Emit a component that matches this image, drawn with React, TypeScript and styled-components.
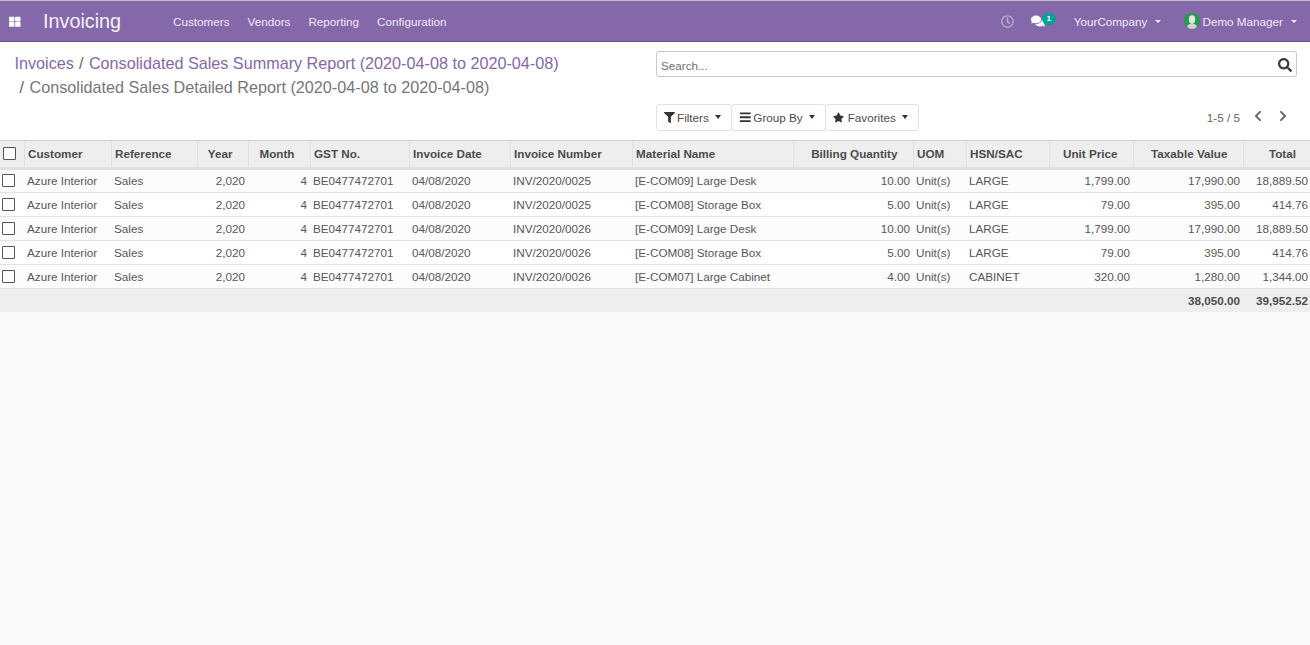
import { FC } from 'react'
import styled, { createGlobalStyle } from 'styled-components'
import { FaFilter, FaBars, FaStar, FaComments, FaChevronLeft, FaChevronRight, FaSearch, FaThLarge, FaRegClock } from 'react-icons/fa'

const GlobalStyle = createGlobalStyle`
  html, body {
    margin: 0;
    height: 100%;
    background: #f9f9f9;
    font-family: 'Liberation Sans', Arial, sans-serif;
    font-size: 11.7px;
    color: #4c4c4c;
  }
`

const Page = styled.div`
  min-height: 645px;
  background: #f9f9f9;
  overflow: hidden;
`

const NavBar = styled.header`
  height: 42px;
  box-sizing: border-box;
  border-top: 1px solid #bdbdbd;
  border-bottom: 1px solid #6d5292;
  background: #8568aa;
  display: flex;
  align-items: center;
  color: #fff;
`

const AppsToggle = styled.span`
  width: 43px;
  padding: 1px 0 0 9px;
  box-sizing: border-box;
  display: flex;
  font-size: 11.5px;
`

const Brand = styled.span`
  width: 130px;
  padding-top: 1px;
  font-size: 19.8px;
  line-height: 1;
  color: #f4f1f8;
`

const Menu = styled.nav`
  display: flex;
  gap: 18px;
  font-size: 11.7px;
  color: #efeaf5;
`

const Systray = styled.div`
  margin-left: auto;
  display: flex;
  align-items: center;
  color: #efeaf5;
`

const Clock = styled.span`
  display: flex;
  font-size: 13px;
  color: #bdaed3;
  margin-right: 17px;
`

const Messages = styled.span`
  position: relative;
  display: flex;
  font-size: 14px;
  color: #fff;
  margin-right: 29px;
`

const Badge = styled.span`
  position: absolute;
  left: 11px;
  top: -1px;
  width: 14px;
  height: 12px;
  border-radius: 6px;
  background: #00a09d;
  color: #fff;
  font-size: 8px;
  font-weight: bold;
  line-height: 12px;
  text-align: center;
`

const Caret = styled.span`
  display: inline-block;
  margin-left: 8px;
  vertical-align: 2px;
  border-top: 3.5px solid currentColor;
  border-left: 3.5px solid transparent;
  border-right: 3.5px solid transparent;
`

const SystrayMenu = styled.span<{ $gap: number }>`
  display: flex;
  align-items: center;
  margin-right: ${(p) => p.$gap}px;
`

const Avatar = styled.svg`
  width: 16px;
  height: 16px;
  margin-right: 2px;
`

const ControlPanel = styled.section`
  height: 99px;
  box-sizing: border-box;
  background: #fff;
  border-bottom: 1px solid #cfcfcf;
  display: grid;
  grid-template-columns: 656px 1fr;
  padding-right: 13px;
`

const Breadcrumb = styled.div`
  padding: 9px 0 0 14.5px;
  font-size: 16.2px;
  line-height: 24px;
  color: #777;
`

const Crumb = styled.a`
  color: #8568aa;
`

const Sep = styled.span`
  padding: 0 5.5px 0 5px;
  color: #666;
`

const RightPanel = styled.div`
  padding-top: 9px;
  display: flex;
  flex-direction: column;
`

const SearchBox = styled.div`
  height: 26px;
  box-sizing: border-box;
  border: 1px solid #c9c9c9;
  border-radius: 3px;
  display: flex;
  align-items: center;
  justify-content: space-between;
  padding: 3px 4px 0 4px;
  color: #6f6f6f;
  font-size: 11.7px;
`

const SearchIcon = styled.span`
  display: flex;
  color: #333d45;
  font-size: 14px;
  margin-top: -2px;
`

const ToolRow = styled.div`
  margin-top: 27px;
  display: flex;
  align-items: center;
  justify-content: space-between;
`

const BtnGroup = styled.div`
  display: flex;
`

const ToolBtn = styled.button<{ $iconGap: number; $iconSize: number }>`
  height: 27px;
  box-sizing: border-box;
  padding: 0 10px 0 7px;
  margin-right: -1px;
  border: 1px solid #e2e2e2;
  border-radius: 3px;
  background: #fff;
  color: #4c4c4c;
  font: inherit;
  display: flex;
  align-items: center;
  svg {
    font-size: ${(p) => p.$iconSize}px;
    margin-right: ${(p) => p.$iconGap}px;
    color: #333;
  }
  ${Caret} {
    margin: 0 0 2px 6px;
    color: #333;
    border-top-width: 4px;
  }
`

const Pager = styled.div`
  display: flex;
  align-items: center;
  color: #6f6259;
  font-size: 11.7px;
  svg {
    font-size: 12px;
    color: #666;
  }
`

const PagerValue = styled.span`
  margin-right: 12px;
`

const PagerPrev = styled.span`
  display: flex;
  margin-bottom: 4px;
`

const PagerNext = styled.span`
  display: flex;
  margin: 0 8px 4px 13px;
`

const ListTable = styled.table`
  width: 1310px;
  table-layout: fixed;
  border-collapse: collapse;
  background: #fff;
  font-size: 11.7px;
  color: #4c4c4c;
`

const HeadCell = styled.th<{ $right?: boolean }>`
  height: 27px;
  padding: 0 3.5px;
  box-sizing: border-box;
  background: #eee;
  border-left: 1px solid #dee2e6;
  border-bottom: 3px solid #dee2e6;
  font-weight: bold;
  color: #4c4c4c;
  text-align: ${(p) => (p.$right ? 'right' : 'left')};
  padding-right: ${(p) => (p.$right ? 15 : 3.5)}px;
  &:first-child {
    border-left: 0;
  }
  &:last-child {
    padding-right: 14px;
  }
`

const Row = styled.tr<{ $odd: boolean }>`
  background: ${(p) => (p.$odd ? '#fcfcfc' : '#fff')};
`

const Cell = styled.td<{ $right?: boolean }>`
  height: 24px;
  padding: 0 3px;
  box-sizing: border-box;
  border-bottom: 1px solid #dee2e6;
  white-space: nowrap;
  overflow: hidden;
  color: #575757;
  text-align: ${(p) => (p.$right ? 'right' : 'left')};
  &:last-child {
    padding-right: 2px;
  }
`

const FootCell = styled.td`
  height: 24px;
  padding: 0 3px;
  box-sizing: border-box;
  background: #eee;
  font-weight: bold;
  text-align: right;
  color: #4c4c4c;
  &:last-child {
    padding-right: 2px;
  }
`

const Check = styled.span`
  display: block;
  width: 13px;
  height: 13px;
  box-sizing: border-box;
  border: 1px solid #555;
  background: #fff;
  margin-left: -1px;
  border-radius: 1px;
`

const widths = [24, 87, 86, 51, 62, 99, 101, 122, 161, 120, 53, 83, 84, 110, 67]

const columns: { label: string; right?: boolean }[] = [
  { label: 'Customer' },
  { label: 'Reference' },
  { label: 'Year', right: true },
  { label: 'Month', right: true },
  { label: 'GST No.' },
  { label: 'Invoice Date' },
  { label: 'Invoice Number' },
  { label: 'Material Name' },
  { label: 'Billing Quantity', right: true },
  { label: 'UOM' },
  { label: 'HSN/SAC' },
  { label: 'Unit Price', right: true },
  { label: 'Taxable Value', right: true },
  { label: 'Total', right: true },
]

const rows = [
  ['INV/2020/0025', '[E-COM09] Large Desk', '10.00', 'LARGE', '1,799.00', '17,990.00', '18,889.50'],
  ['INV/2020/0025', '[E-COM08] Storage Box', '5.00', 'LARGE', '79.00', '395.00', '414.76'],
  ['INV/2020/0026', '[E-COM09] Large Desk', '10.00', 'LARGE', '1,799.00', '17,990.00', '18,889.50'],
  ['INV/2020/0026', '[E-COM08] Storage Box', '5.00', 'LARGE', '79.00', '395.00', '414.76'],
  ['INV/2020/0026', '[E-COM07] Large Cabinet', '4.00', 'CABINET', '320.00', '1,280.00', '1,344.00'],
]

const App: FC = () => {
  return (
    <Page>
      <GlobalStyle />
      <NavBar>
        <AppsToggle>
          <FaThLarge />
        </AppsToggle>
        <Brand>Invoicing</Brand>
        <Menu>
          <span>Customers</span>
          <span>Vendors</span>
          <span>Reporting</span>
          <span>Configuration</span>
        </Menu>
        <Systray>
          <Clock>
            <FaRegClock />
          </Clock>
          <Messages>
            <FaComments />
            <Badge>1</Badge>
          </Messages>
          <SystrayMenu $gap={23}>
            YourCompany
            <Caret />
          </SystrayMenu>
          <SystrayMenu $gap={13}>
            <Avatar viewBox="0 0 16 16">
              <circle cx="8" cy="8" r="8" fill="#1f9d4d" />
              <ellipse cx="8" cy="6.5" rx="3.2" ry="4.2" fill="#e4e4e4" />
              <path d="M3 14c1-3 3-3.6 5-3.6s4 .6 5 3.6a8 8 0 0 1-10 0z" fill="#d2d2d2" />
            </Avatar>
            Demo Manager
            <Caret />
          </SystrayMenu>
        </Systray>
      </NavBar>

      <ControlPanel>
        <Breadcrumb>
          <div>
            <Crumb>Invoices</Crumb>
            <Sep>/</Sep>
            <Crumb>Consolidated Sales Summary Report (2020-04-08 to 2020-04-08)</Crumb>
          </div>
          <div>
            <Sep>/</Sep>
            Consolidated Sales Detailed Report (2020-04-08 to 2020-04-08)
          </div>
        </Breadcrumb>
        <RightPanel>
          <SearchBox>
            Search...
            <SearchIcon>
              <FaSearch />
            </SearchIcon>
          </SearchBox>
          <ToolRow>
            <BtnGroup>
              <ToolBtn $iconGap={2} $iconSize={11}>
                <FaFilter /> Filters
                <Caret />
              </ToolBtn>
              <ToolBtn $iconGap={2} $iconSize={12.5}>
                <FaBars /> Group By
                <Caret />
              </ToolBtn>
              <ToolBtn $iconGap={4} $iconSize={11}>
                <FaStar /> Favorites
                <Caret />
              </ToolBtn>
            </BtnGroup>
            <Pager>
              <PagerValue>1-5 / 5</PagerValue>
              <PagerPrev>
                <FaChevronLeft />
              </PagerPrev>
              <PagerNext>
                <FaChevronRight />
              </PagerNext>
            </Pager>
          </ToolRow>
        </RightPanel>
      </ControlPanel>

      <ListTable>
        <colgroup>
          {widths.map((w, i) => (
            <col key={i} style={{ width: w }} />
          ))}
        </colgroup>
        <thead>
          <tr>
            <HeadCell>
              <Check />
            </HeadCell>
            {columns.map((c) => (
              <HeadCell key={c.label} $right={c.right}>
                {c.label}
              </HeadCell>
            ))}
          </tr>
        </thead>
        <tbody>
          {rows.map((r, i) => (
            <Row key={i} $odd={i % 2 === 0}>
              <Cell>
                <Check />
              </Cell>
              <Cell>Azure Interior</Cell>
              <Cell>Sales</Cell>
              <Cell $right>2,020</Cell>
              <Cell $right>4</Cell>
              <Cell>BE0477472701</Cell>
              <Cell>04/08/2020</Cell>
              <Cell>{r[0]}</Cell>
              <Cell>{r[1]}</Cell>
              <Cell $right>{r[2]}</Cell>
              <Cell>Unit(s)</Cell>
              <Cell>{r[3]}</Cell>
              <Cell $right>{r[4]}</Cell>
              <Cell $right>{r[5]}</Cell>
              <Cell $right>{r[6]}</Cell>
            </Row>
          ))}
        </tbody>
        <tfoot>
          <tr>
            {widths.slice(0, 13).map((_, i) => (
              <FootCell key={i} />
            ))}
            <FootCell>38,050.00</FootCell>
            <FootCell>39,952.52</FootCell>
          </tr>
        </tfoot>
      </ListTable>
    </Page>
  )
}

export default App
